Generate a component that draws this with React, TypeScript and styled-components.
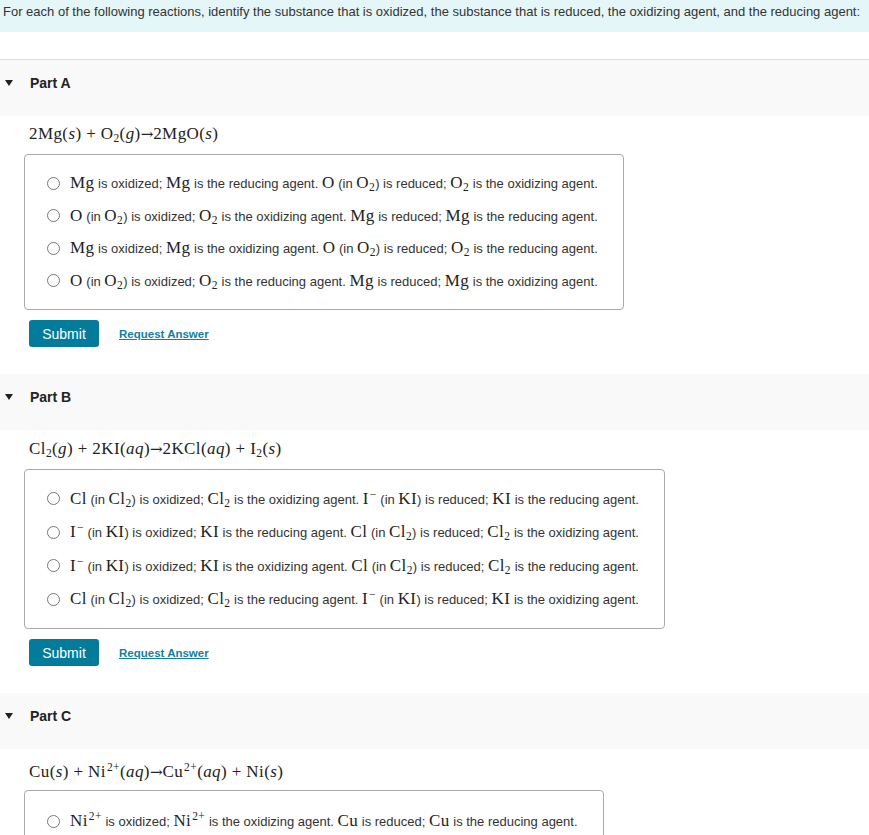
import React from "react";
import styled, { createGlobalStyle } from "styled-components";

const GlobalStyle = createGlobalStyle`
  body {
    margin: 0;
    background: #fff;
    font-family: "Liberation Sans", Arial, sans-serif;
    color: #333;
  }
`;

const Intro = styled.div`
  background: #e5f6f8;
  padding: 4px 4px 12px 3px;
  font-size: 13px;
  line-height: 16px;
  color: #333;
  white-space: nowrap;
`;

const Parts = styled.div`
  margin-top: 27px;
`;

const PartHeader = styled.div<{ $first?: boolean }>`
  display: flex;
  align-items: center;
  height: ${(p) => (p.$first ? 57 : 56)}px;
  box-sizing: border-box;
  padding: 0 0 10px 5px;
  background: #f9f9f9;
  border-top: ${(p) => (p.$first ? "1px solid #dcdcdc" : "none")};
`;

const Caret = styled.span`
  width: 0;
  height: 0;
  border-left: 4.5px solid transparent;
  border-right: 4.5px solid transparent;
  border-top: 6px solid #222;
  margin-right: 17px;
`;

const PartTitle = styled.span`
  font-size: 14px;
  font-weight: 700;
  color: #222;
`;

const PartBody = styled.div`
  padding: 0 0 27px 24px;
`;

const Equation = styled.div<{ $top: number; $bottom: number }>`
  line-height: 20px;
  padding: ${(p) => p.$top}px 0 0 5px;
  margin-bottom: ${(p) => p.$bottom}px;
`;

const Math = styled.span`
  font-family: "Liberation Serif", "Times New Roman", serif;
  font-size: 17px;
  letter-spacing: 0.4px;
  color: #222;

  sub {
    font-size: 11.5px;
    vertical-align: -3px;
    line-height: 0;
  }
  sup {
    font-size: 11.5px;
    vertical-align: 6px;
    line-height: 0;
    margin-left: 1px;
  }
  i {
    font-style: italic;
  }
`;

const Arrow = styled.span`
  font-family: "DejaVu Serif", serif;
  font-size: 15px;
  letter-spacing: 0;
`;

const Choices = styled.div`
  display: inline-block;
  border: 1px solid #aaa;
  border-radius: 4px;
  padding: 12px 25px 12px 22px;
`;

const Choice = styled.label<{ $h: number }>`
  display: flex;
  align-items: center;
  height: ${(p) => p.$h}px;
  font-size: 13px;
  color: #333;
  white-space: nowrap;
`;

const Radio = styled.span`
  flex: none;
  width: 11px;
  height: 11px;
  border: 1px solid #777;
  border-radius: 50%;
  background: #fff;
  margin-right: 10px;
`;

const Text = styled.span`
  display: inline-flex;
  align-items: baseline;
  white-space: pre;
`;

const Actions = styled.div`
  display: flex;
  align-items: center;
  margin-top: 10px;
  padding-left: 5px;
`;

const SubmitButton = styled.button`
  width: 70px;
  height: 27px;
  border: none;
  border-radius: 3px;
  background: #037c9b;
  color: #fff;
  font-family: "Liberation Sans", Arial, sans-serif;
  font-size: 14px;
  padding: 0;
`;

const RequestLink = styled.a`
  margin-left: 20px;
  font-size: 11.5px;
  font-weight: 700;
  color: #117fa1;
  text-decoration: underline;
`;

const M = ({ children }: { children: React.ReactNode }) => <Math>{children}</Math>;
const To = () => <Arrow>→</Arrow>;

const O2 = () => (
  <M>
    O<sub>2</sub>
  </M>
);
const Cl2 = () => (
  <M>
    Cl<sub>2</sub>
  </M>
);
const Iminus = () => (
  <M>
    I<sup>−</sup>
  </M>
);
const Ni2 = () => (
  <M>
    Ni<sup>2+</sup>
  </M>
);

type Part = {
  name: string;
  first?: boolean;
  equation: React.ReactNode;
  eqTop: number;
  eqBottom: number;
  rowHeight: number;
  choices: React.ReactNode[];
};

const parts: Part[] = [
  {
    name: "Part A",
    first: true,
    eqTop: 8,
    eqBottom: 10,
    rowHeight: 32.5,
    equation: (
      <M>
        2Mg(<i>s</i>) + O<sub>2</sub>(<i>g</i>)
        <To />
        2MgO(<i>s</i>)
      </M>
    ),
    choices: [
      <>
        <M>Mg</M> is oxidized; <M>Mg</M> is the reducing agent. <M>O</M> (in <O2 />) is reduced; <O2 /> is the oxidizing agent.
      </>,
      <>
        <M>O</M> (in <O2 />) is oxidized; <O2 /> is the oxidizing agent. <M>Mg</M> is reduced; <M>Mg</M> is the reducing agent.
      </>,
      <>
        <M>Mg</M> is oxidized; <M>Mg</M> is the oxidizing agent. <M>O</M> (in <O2 />) is reduced; <O2 /> is the reducing agent.
      </>,
      <>
        <M>O</M> (in <O2 />) is oxidized; <O2 /> is the reducing agent. <M>Mg</M> is reduced; <M>Mg</M> is the oxidizing agent.
      </>,
    ],
  },
  {
    name: "Part B",
    eqTop: 9,
    eqBottom: 10,
    rowHeight: 33.5,
    equation: (
      <M>
        Cl<sub>2</sub>(<i>g</i>) + 2KI(<i>aq</i>)
        <To />
        2KCl(<i>aq</i>) + I<sub>2</sub>(<i>s</i>)
      </M>
    ),
    choices: [
      <>
        <M>Cl</M> (in <Cl2 />) is oxidized; <Cl2 /> is the oxidizing agent. <Iminus /> (in <M>KI</M>) is reduced; <M>KI</M> is the reducing agent.
      </>,
      <>
        <Iminus /> (in <M>KI</M>) is oxidized; <M>KI</M> is the reducing agent. <M>Cl</M> (in <Cl2 />) is reduced; <Cl2 /> is the oxidizing agent.
      </>,
      <>
        <Iminus /> (in <M>KI</M>) is oxidized; <M>KI</M> is the oxidizing agent. <M>Cl</M> (in <Cl2 />) is reduced; <Cl2 /> is the reducing agent.
      </>,
      <>
        <M>Cl</M> (in <Cl2 />) is oxidized; <Cl2 /> is the reducing agent. <Iminus /> (in <M>KI</M>) is reduced; <M>KI</M> is the oxidizing agent.
      </>,
    ],
  },
  {
    name: "Part C",
    eqTop: 13,
    eqBottom: 8,
    rowHeight: 36,
    equation: (
      <M>
        Cu(<i>s</i>) + Ni<sup>2+</sup>(<i>aq</i>)
        <To />
        Cu<sup>2+</sup>(<i>aq</i>) + Ni(<i>s</i>)
      </M>
    ),
    choices: [
      <>
        <Ni2 /> is oxidized; <Ni2 /> is the oxidizing agent. <M>Cu</M> is reduced; <M>Cu</M> is the reducing agent.
      </>,
      <>
        <M>Cu</M> is oxidized; <M>Cu</M> is the reducing agent. <Ni2 /> is reduced; <Ni2 /> is the oxidizing agent.
      </>,
    ],
  },
];

export default function App() {
  return (
    <>
      <GlobalStyle />
      <Intro>
        For each of the following reactions, identify the substance that is oxidized, the substance that is reduced, the
        oxidizing agent, and the reducing agent:
      </Intro>
      <Parts>
        {parts.map((part) => (
          <section key={part.name}>
            <PartHeader $first={part.first}>
              <Caret />
              <PartTitle>{part.name}</PartTitle>
            </PartHeader>
            <PartBody>
              <Equation $top={part.eqTop} $bottom={part.eqBottom}>
                {part.equation}
              </Equation>
              <Choices>
                {part.choices.map((c, i) => (
                  <Choice key={i} $h={part.rowHeight}>
                    <Radio />
                    <Text>{c}</Text>
                  </Choice>
                ))}
              </Choices>
              <Actions>
                <SubmitButton>Submit</SubmitButton>
                <RequestLink href="#">Request Answer</RequestLink>
              </Actions>
            </PartBody>
          </section>
        ))}
      </Parts>
    </>
  );
}
